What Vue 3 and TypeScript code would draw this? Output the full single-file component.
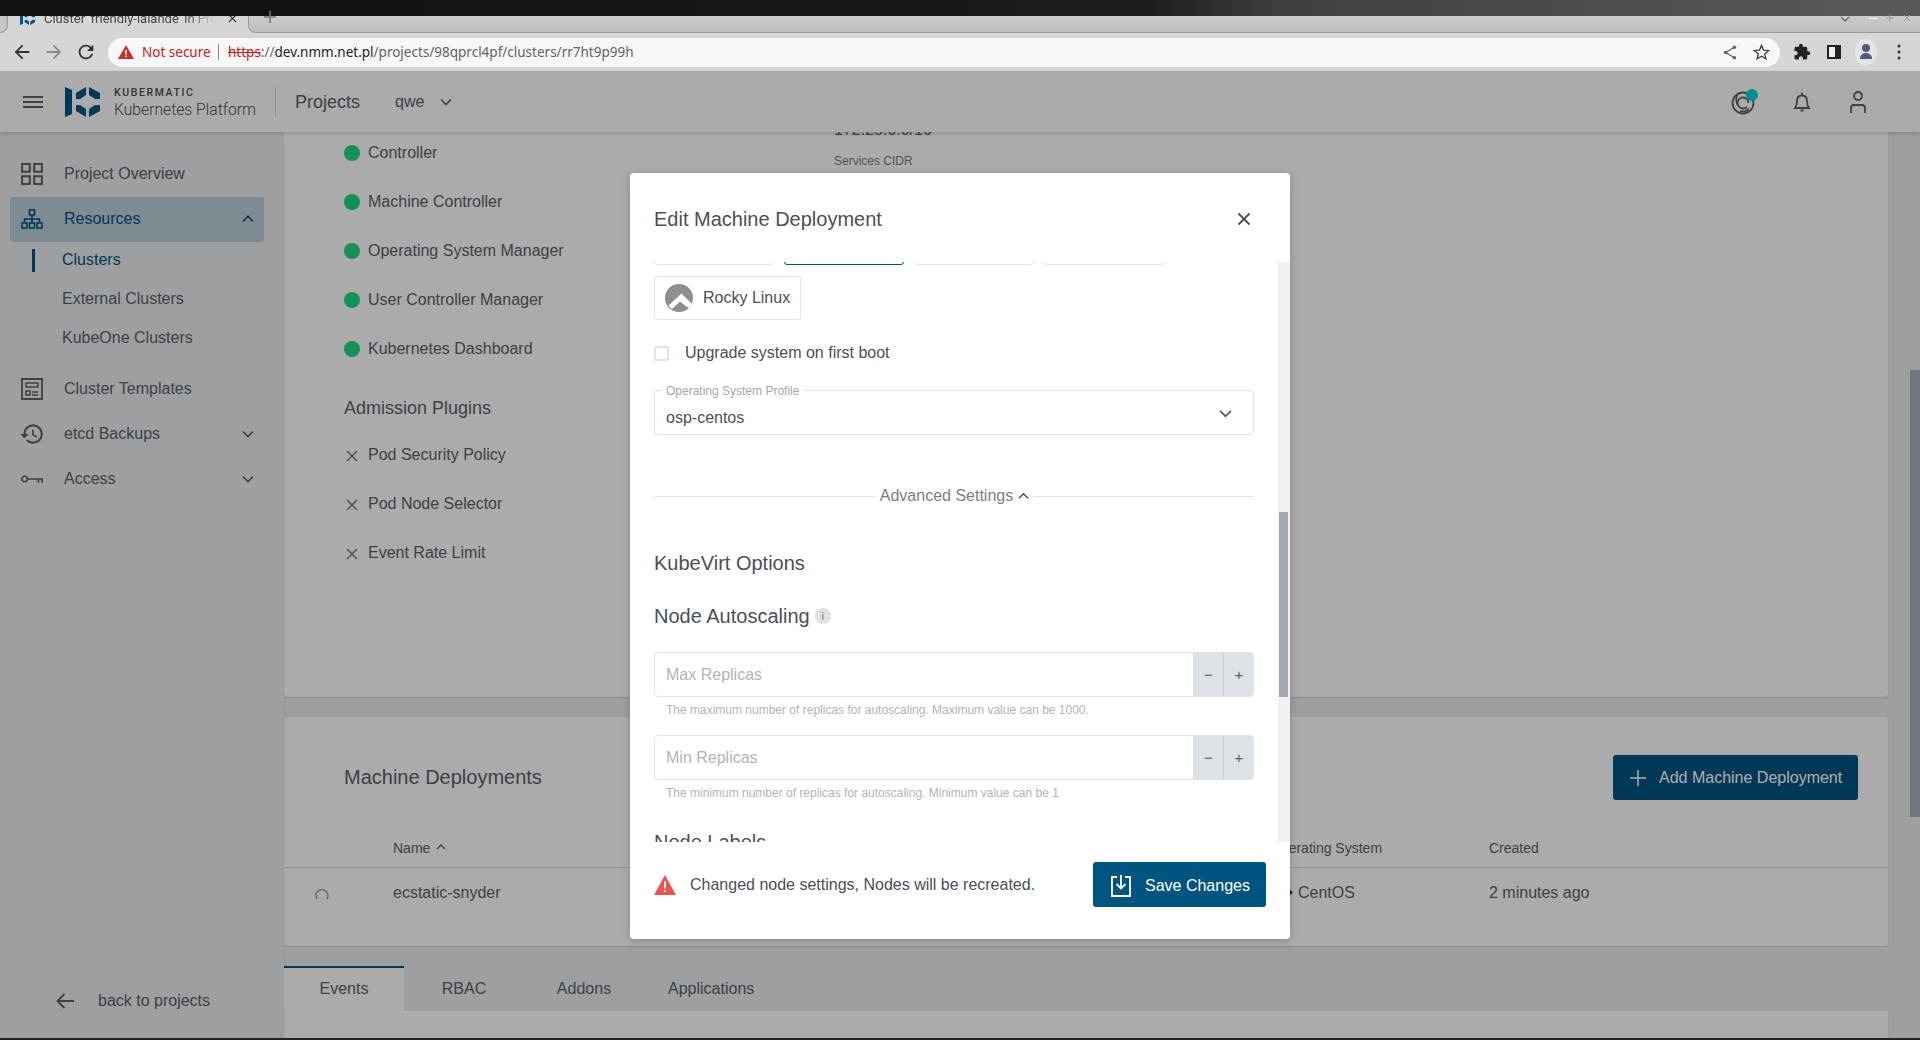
<script setup lang="ts">
const healthRows: string[] = [
  'Controller',
  'Machine Controller',
  'Operating System Manager',
  'User Controller Manager',
  'Kubernetes Dashboard'
]
const admissionPlugins: string[] = ['Pod Security Policy', 'Pod Node Selector', 'Event Rate Limit']
const subItems: string[] = ['Clusters', 'External Clusters', 'KubeOne Clusters']
const tabs: string[] = ['Events', 'RBAC', 'Addons', 'Applications']
const replicaFields = [
  { name: 'Max Replicas', hint: 'The maximum number of replicas for autoscaling. Maximum value can be 1000.' },
  { name: 'Min Replicas', hint: 'The minimum number of replicas for autoscaling. Minimum value can be 1' }
]
</script>

<template>
  <div class="screen">
    <div class="wallpaper"></div>

    <div class="tabstrip">
      <div class="strip-left"></div>
      <div class="browser-tab">
        <div class="browser-tab-inner">
          <svg class="favicon" viewBox="0 0 35 30"><path d="M0 0l7 3v24l-7 3zM21 0v8l-6 4h-4V6zM24 0l11 6v6h-5l-6-4zM11 18h4l6 4v8L11 24zM30 18h5v6l-11 6v-8z" fill="#005480" /></svg>
          <span class="tab-title">Cluster 'friendly-lalande' in Project qwe</span>
          <svg class="tab-close" viewBox="0 0 10 10"><path d="M1 1l8 8M9 1l-8 8" stroke="#333" stroke-width="1.4" /></svg>
        </div>
      </div>
      <div class="strip-right">
        <svg class="new-tab" viewBox="0 0 12 12"><path d="M6 0v12M0 6h12" stroke="#777" stroke-width="1.6" /></svg>
        <div class="window-controls">
          <svg class="win-chevron" viewBox="0 0 10 6"><path d="M1 1l4 4 4-4" fill="none" stroke="#666" stroke-width="1.3" /></svg>
          <span class="win-minus"></span>
          <svg class="win-plus" viewBox="0 0 8 8"><path d="M4 0v8M0 4h8" stroke="#999" stroke-width="1" /></svg>
          <svg class="win-plus" viewBox="0 0 8 8"><path d="M1 1l6 6M7 1l-6 6" stroke="#999" stroke-width="1" /></svg>
        </div>
      </div>
    </div>

    <div class="toolbar">
      <svg class="nav-icon first" viewBox="0 0 24 24"><path d="M20 11H7.830l5.590-5.590L12 4l-8 8 8 8 1.410-1.410L7.830 13H20z" fill="#333" /></svg>
      <svg class="nav-icon" viewBox="0 0 24 24"><path d="M4 11h12.170l-5.590-5.590L12 4l8 8-8 8-1.410-1.410L16.170 13H4z" fill="#888" /></svg>
      <svg class="nav-icon" viewBox="0 0 24 24"><path d="M17.650 6.350A7.958 7.958 0 0 0 12 4c-4.420 0-7.990 3.580-7.990 8s3.570 8 7.990 8c3.730 0 6.840-2.550 7.730-6h-2.080A5.990 5.990 0 0 1 12 18c-3.310 0-6-2.690-6-6s2.690-6 6-6c1.660 0 3.140.69 4.220 1.780L13 11h7V4l-2.350 2.350z" fill="#333" /></svg>
      <div class="omnibox">
        <svg class="warn-small" viewBox="0 0 16 14"><path d="M8 0l8 14H0z" fill="#c9302c" /><path d="M7.200 5h1.600v4.600H7.200zM7.200 10.600h1.600v1.600H7.200z" fill="#fff" /></svg>
        <span class="not-secure">Not secure</span>
        <span class="omni-sep"></span>
        <span class="url"><span class="scheme">https</span><span class="url-path">://</span><span class="host">dev.nmm.net.pl</span><span class="url-path">/projects/98qprcl4pf/clusters/rr7ht9p99h</span></span>
        <svg class="omni-icon share" viewBox="0 0 16 18"><circle cx="13" cy="3" r="2" fill="#5f6368" /><circle cx="3" cy="9" r="2" fill="#5f6368" /><circle cx="13" cy="15" r="2" fill="#5f6368" /><path d="M13 3L3 9l10 6" fill="none" stroke="#5f6368" stroke-width="1.3" /></svg>
        <svg class="omni-icon star" viewBox="0 0 24 24"><path d="M12 17.270L18.180 21l-1.640-7.030L22 9.240l-7.190-.61L12 2 9.190 8.630 2 9.240l5.460 4.730L5.820 21z" fill="none" stroke="#444" stroke-width="2" /></svg>
      </div>
      <svg class="ext-icon puzzle" viewBox="0 0 24 24"><path d="M20.500 11H19V7c0-1.100-.9-2-2-2h-4V3.500a2.500 2.500 0 0 0-5 0V5H4c-1.100 0-1.990.9-1.990 2v3.800H3.500c1.490 0 2.700 1.210 2.700 2.700s-1.210 2.700-2.700 2.700H2V20c0 1.100.9 2 2 2h3.800v-1.500c0-1.490 1.210-2.700 2.700-2.700 1.490 0 2.700 1.210 2.700 2.700V22H17c1.100 0 2-.9 2-2v-4h1.500a2.500 2.500 0 0 0 0-5z" fill="#222" /></svg>
      <svg class="ext-icon panel" viewBox="0 0 14 14"><path d="M0 0h14v14H0z" fill="#222" /><path d="M2 2h6v10H2z" fill="#eee" /></svg>
      <svg class="ext-icon avatar" viewBox="0 0 22 26"><rect width="22" height="26" rx="11" fill="#e3e5ea" /><circle cx="11" cy="9" r="4" fill="#4f5b73" /><path d="M5 20c0-4 3-6 6-6s6 2 6 6z" fill="#4f5b73" /></svg>
      <svg class="ext-icon kebab" viewBox="0 0 4 16"><circle cx="2" cy="2" r="1.5" fill="#333" /><circle cx="2" cy="8" r="1.5" fill="#333" /><circle cx="2" cy="14" r="1.5" fill="#333" /></svg>
    </div>

    <div class="app">
      <header class="app-header">
        <svg class="hamburger" viewBox="0 0 20 12"><path d="M0 1h20M0 6h20M0 11h20" stroke="#5a5f66" stroke-width="1.8" /></svg>
        <svg class="logo" viewBox="0 0 35 30"><path d="M0 0l7 3v24l-7 3zM21 0v8l-6 4h-4V6zM24 0l11 6v6h-5l-6-4zM11 18h4l6 4v8L11 24zM30 18h5v6l-11 6v-8z" fill="#005480" /></svg>
        <div class="brand">
          <span class="brand-top">KUBERMATIC</span>
          <span class="brand-bottom">Kubernetes Platform</span>
        </div>
        <span class="header-divider"></span>
        <span class="projects-link">Projects</span>
        <span class="project-name">qwe</span>
        <svg class="chevron project-chevron" viewBox="0 0 12 8"><path d="M1 1.5l5 5 5-5" /></svg>
        <div class="header-actions">
          <div class="globe">
            <svg viewBox="0 0 24 24"><circle cx="12" cy="12" r="10.500" fill="none" stroke="#5a5f66" stroke-width="1.8" /><path d="M17.500 12a5.500 5.500 0 1 0-1.500 3.800" fill="none" stroke="#5a5f66" stroke-width="1.8" /><path d="M6.500 3.500C4.500 7 5 11 7 14.500M18 17.500c-2 2.500-5.500 3.500-9 2.500" fill="none" stroke="#5a5f66" stroke-width="1.6" /></svg>
            <span class="globe-dot"></span>
          </div>
          <svg class="action bell" viewBox="0 0 24 24"><path d="M5 18c1.500-2 2-3.500 2-7 0-3.500 2-5.500 5-5.500s5 2 5 5.500c0 3.500.5 5 2 7zM12 2.500v3M10.500 20.500h3" fill="none" stroke="#5a5f66" stroke-width="1.8" /></svg>
          <svg class="action" viewBox="0 0 24 24"><circle cx="12" cy="6" r="4" fill="none" stroke="#5a5f66" stroke-width="1.8" /><path d="M5 23v-5c0-2 1-3 3-3h8c2 0 3 1 3 3v5" fill="none" stroke="#5a5f66" stroke-width="1.8" /></svg>
        </div>
      </header>

      <div class="app-body">
        <aside class="sidebar">
          <div class="nav-item overview">
            <svg class="nav-glyph" viewBox="0 0 20 20"><path d="M1 1h7v7H1zM12 1h7v7h-7zM1 12h7v7H1zM12 12h7v7h-7z" fill="none" stroke="#5a5f66" stroke-width="1.8" /></svg>
            <span>Project Overview</span>
          </div>
          <div class="nav-item active">
            <svg class="nav-glyph" viewBox="0 0 22 20"><path d="M8.500 1h5v5h-5zM1 14h5v5H1zM8.500 14h5v5h-5zM16 14h5v5h-5zM11 6v8M3.500 14v-4h15v4" fill="none" stroke="#005480" stroke-width="1.600" /></svg>
            <span>Resources</span>
            <svg class="chevron nav-chevron up" viewBox="0 0 12 8"><path d="M1 6.500l5-5 5 5" /></svg>
          </div>
          <div class="sub-items">
            <div v-for="(item, i) in subItems" :key="item" :class="['sub-item', { current: i === 0 }]">
              <span class="sub-marker"></span>{{ item }}
            </div>
          </div>
          <div class="nav-item">
            <svg class="nav-glyph" viewBox="0 0 22 22"><path d="M1 1h20v20H1z" fill="none" stroke="#5a5f66" stroke-width="1.800" /><path d="M5 5h12v4H5zM5 13h4v4H5z" fill="none" stroke="#5a5f66" stroke-width="1.500" /><path d="M11 14h6M11 17h6" stroke="#5a5f66" stroke-width="1.500" /></svg>
            <span>Cluster Templates</span>
          </div>
          <div class="nav-item">
            <svg class="nav-glyph history" viewBox="0 0 24 24"><path d="M13 3a9 9 0 0 0-9 9H1l3.890 3.890.07.14L9 12H6c0-3.870 3.130-7 7-7s7 3.130 7 7-3.130 7-7 7c-1.930 0-3.680-.79-4.940-2.060l-1.420 1.420A8.954 8.954 0 0 0 13 21a9 9 0 0 0 0-18zm-1 5v5l4.280 2.540.72-1.210-3.500-2.080V8H12z" fill="#5a5f66" /></svg>
            <span>etcd Backups</span>
            <svg class="chevron nav-chevron" viewBox="0 0 12 8"><path d="M1 1.500l5 5 5-5" /></svg>
          </div>
          <div class="nav-item">
            <svg class="nav-glyph" viewBox="0 0 24 10"><circle cx="4" cy="5" r="3" fill="none" stroke="#5a5f66" stroke-width="1.800" /><path d="M7 5h17M19 5v4M23 5v4" fill="none" stroke="#5a5f66" stroke-width="1.800" /></svg>
            <span>Access</span>
            <svg class="chevron nav-chevron" viewBox="0 0 12 8"><path d="M1 1.500l5 5 5-5" /></svg>
          </div>
          <div class="back-link">
            <svg class="back-arrow" viewBox="0 0 18 16"><path d="M18 8H2M8.500 1L1.500 8l7 7" fill="none" stroke="#5a5f66" stroke-width="1.800" /></svg>
            <span>back to projects</span>
          </div>
        </aside>

        <main class="content">
          <section class="card health-card">
            <div class="health-left">
              <div v-for="name in healthRows" :key="name" class="status-row">
                <span class="dot"></span>{{ name }}
              </div>
              <h3 class="plugins-title">Admission Plugins</h3>
              <div v-for="name in admissionPlugins" :key="name" class="status-row plugin-row">
                <svg class="cross" viewBox="0 0 12 12"><path d="M1 1l10 10M11 1L1 11" stroke="#777b82" stroke-width="1.500" /></svg>{{ name }}
              </div>
            </div>
            <div class="health-right">
              <div class="cidr-value">172.25.0.0/16</div>
              <div class="cidr-label">Services CIDR</div>
            </div>
          </section>

          <section class="card md-card">
            <div class="md-head">
              <h2>Machine Deployments</h2>
              <button class="add-btn">
                <svg viewBox="0 0 16 16"><path d="M8 0v16M0 8h16" stroke="#fff" stroke-width="1.500" /></svg>
                Add Machine Deployment
              </button>
            </div>
            <div class="md-row md-header">
              <span></span>
              <span>Name <svg class="sort" viewBox="0 0 10 6"><path d="M1 5l4-4 4 4" fill="none" stroke="#5a5f66" stroke-width="1.300" /></svg></span>
              <span>Operating System</span>
              <span>Created</span>
            </div>
            <div class="md-row md-data">
              <svg class="spinner" viewBox="0 0 14 14"><path d="M2 12A6 6 0 1 1 12 12" fill="none" stroke="#777b82" stroke-width="1.200" /></svg>
              <span>ecstatic-snyder</span>
              <span class="os-cell"><span class="os-mark"></span>CentOS</span>
              <span>2 minutes ago</span>
            </div>
          </section>

          <nav class="page-tabs">
            <span v-for="(tab, i) in tabs" :key="tab" :class="['page-tab', { selected: i === 0 }]">{{ tab }}</span>
          </nav>
          <section class="card tab-panel"></section>
        </main>
        <div class="page-thumb"></div>
      </div>

      <div class="backdrop">
        <div class="dialog">
          <div class="dialog-title">
            <h2>Edit Machine Deployment</h2>
            <svg class="dialog-close" viewBox="0 0 14 14"><path d="M1.500 1.500l11 11M12.500 1.500l-11 11" stroke="#4a5058" stroke-width="1.800" /></svg>
          </div>

          <div class="dialog-body">
            <div class="os-tiles-cut">
              <span class="os-tile"></span>
              <span class="os-tile picked"></span>
              <span class="os-tile"></span>
              <span class="os-tile"></span>
            </div>
            <div class="rocky-tile">
              <svg viewBox="0 0 28 28"><circle cx="14" cy="14" r="14" fill="#8f8f8f" /><path d="M16.500 9.500L27 20l-3.500 4L15 17.500 7 25l-3.500-3.500z" fill="#fff" /></svg>
              Rocky Linux
            </div>
            <label class="check-row"><span class="check-box"></span>Upgrade system on first boot</label>
            <div class="select-field">
              <span class="floating-label">Operating System Profile</span>
              <span class="select-value">osp-centos</span>
              <svg class="chevron select-chevron" viewBox="0 0 12 8"><path d="M1 1.500l5 5 5-5" /></svg>
            </div>
            <div class="advanced">
              <span class="advanced-line"></span>
              <span class="advanced-text">Advanced Settings</span>
              <svg class="chevron advanced-chevron" viewBox="0 0 12 8"><path d="M1 6.500l5-5 5 5" /></svg>
              <span class="advanced-line"></span>
            </div>
            <h3 class="form-heading kubevirt">KubeVirt Options</h3>
            <h3 class="form-heading autoscaling">Node Autoscaling <span class="info-dot">i</span></h3>
            <template v-for="field in replicaFields" :key="field.name">
              <div class="number-field">
                <span class="number-placeholder">{{ field.name }}</span>
                <span class="stepper">&minus;</span>
                <span class="stepper">+</span>
              </div>
              <div class="field-hint">{{ field.hint }}</div>
            </template>
            <h3 class="form-heading labels">Node Labels</h3>
            <div class="body-track"><div class="body-thumb"></div></div>
          </div>

          <div class="dialog-footer">
            <svg class="warn-icon" viewBox="0 0 22 20"><path d="M11 0l11 20H0z" fill="#ef5350" /><path d="M10 6.500h2v7h-2zM10 15h2v2h-2z" fill="#fff" /></svg>
            <span class="warn-text">Changed node settings, Nodes will be recreated.</span>
            <button class="save-btn">
              <svg viewBox="0 0 20 22"><path d="M6 2H1v19h18V2h-5" fill="none" stroke="#fff" stroke-width="1.800" /><path d="M10 0v13M5.500 9l4.500 4.500L14.500 9" fill="none" stroke="#fff" stroke-width="1.800" /></svg>
              Save Changes
            </button>
          </div>
        </div>
      </div>
    </div>
    <div class="bottom-edge"></div>
  </div>
</template>

<style>
html,
body {
  margin: 0;
  overflow: hidden;
}
</style>

<style scoped>
.screen {
  position: relative;
  width: 1920px;
  height: 1040px;
  display: flex;
  flex-direction: column;
  overflow: hidden;
  font-family: "Liberation Sans", Arial, sans-serif;
  color: #5a5f66;
}

h2,
h3 {
  margin: 0;
  font-weight: 400;
}

.wallpaper {
  height: 16px;
  flex: none;
  background: linear-gradient(90deg, #121212 0%, #161616 45%, #1e1e1e 60%, #404040 67%, #5a5a5a 100%);
}

/* browser chrome */
.tabstrip {
  height: 17px;
  flex: none;
  display: flex;
  background: #d6d6d6;
}

.strip-left {
  width: 8px;
  background: #c4c4c4;
  border-bottom: 1px solid #999;
  border-right: 1px solid #999;
  border-bottom-right-radius: 8px;
  box-sizing: border-box;
}

.browser-tab {
  width: 240px;
  overflow: hidden;
}

.browser-tab-inner {
  height: 20px;
  margin-top: -8px;
  display: flex;
  align-items: center;
  padding-left: 12px;
}

.favicon {
  width: 15px;
  height: 13px;
  flex: none;
}

.tab-title {
  width: 172px;
  margin-left: 9px;
  font-family: Roboto, sans-serif;
  font-size: 13px;
  white-space: nowrap;
  overflow: hidden;
  color: #444;
  -webkit-mask-image: linear-gradient(90deg, #000 82%, transparent);
  mask-image: linear-gradient(90deg, #000 82%, transparent);
}

.tab-close {
  width: 9px;
  height: 9px;
  margin-left: 12px;
}

.strip-right {
  flex: 1;
  display: flex;
  justify-content: space-between;
  background: linear-gradient(#cbcbcb, #bdbdbd);
  border-bottom: 1px solid #999;
  border-left: 1px solid #999;
  border-bottom-left-radius: 8px;
  box-sizing: border-box;
}

.new-tab {
  width: 12px;
  height: 12px;
  margin: -5px 0 0 15px;
}

.window-controls {
  display: flex;
  align-items: flex-start;
}

.win-chevron {
  width: 10px;
  height: 6px;
  margin-right: 19px;
}

.win-minus {
  width: 8px;
  height: 1px;
  margin-top: 2px;
  margin-right: 9px;
  background: #fff;
}

.win-plus {
  width: 8px;
  height: 8px;
  margin-right: 9px;
  margin-top: -2px;
}

.toolbar {
  height: 38px;
  flex: none;
  display: flex;
  align-items: center;
  background: #d6d6d6;
  box-sizing: border-box;
}

.nav-icon {
  width: 22px;
  height: 22px;
  margin-right: 10px;
}

.nav-icon.first {
  margin-left: 11px;
}

.omnibox {
  width: 1672px;
  height: 29px;
  margin-left: 1px;
  display: flex;
  align-items: center;
  border-radius: 15px;
  background: #f7f7f7;
  font-family: "Noto Sans", sans-serif;
  font-size: 13.5px;
}

.warn-small {
  width: 16px;
  height: 14px;
  margin-left: 10px;
}

.not-secure {
  margin-left: 8px;
  width: 68px;
  white-space: nowrap;
  color: #c5221f;
}

.omni-sep {
  width: 1px;
  height: 16px;
  margin: 0 9px 0 8px;
  background: #888;
}

.url {
  white-space: nowrap;
  color: #5f6368;
  flex: 1;
}

.scheme {
  color: #c5221f;
  text-decoration: line-through;
}

.host {
  color: #222;
}

.omni-icon {
  flex: none;
}

.share {
  width: 14px;
  height: 17px;
  margin-right: 16px;
}

.star {
  width: 17px;
  height: 17px;
  margin-right: 10px;
}

.ext-icon {
  flex: none;
}

.puzzle {
  width: 18px;
  height: 18px;
  margin-left: 13px;
}

.panel {
  width: 14px;
  height: 14px;
  margin-left: 16px;
}

.avatar {
  width: 22px;
  height: 26px;
  margin-left: 14px;
}

.kebab {
  width: 4px;
  height: 16px;
  margin-left: 20px;
}

/* app */
.app {
  position: relative;
  flex: 1;
  min-height: 0;
  display: flex;
  flex-direction: column;
  background: #e9ebee;
}

.app-header {
  position: relative;
  z-index: 2;
  height: 61px;
  flex: none;
  display: flex;
  align-items: center;
  padding-left: 23px;
  background: #fcfcfc;
  box-shadow: 0 2px 4px rgba(0, 0, 0, 0.15);
}

.hamburger {
  width: 20px;
  height: 12px;
}

.logo {
  width: 35px;
  height: 30px;
  margin-left: 22px;
}

.brand {
  width: 142px;
  margin-left: 14px;
  display: flex;
  flex-direction: column;
  white-space: nowrap;
  color: #494d53;
}

.brand-top {
  font-family: Roboto, sans-serif;
  font-size: 10.5px;
  font-weight: 500;
  letter-spacing: 1.6px;
  line-height: 15px;
}

.brand-bottom {
  font-family: Roboto, sans-serif;
  font-size: 15.7px;
  font-weight: 300;
  line-height: 19px;
}

.header-divider {
  width: 1px;
  height: 30px;
  margin-left: 19px;
  background: #d8d8d8;
}

.projects-link {
  margin: 2px 0 0 19px;
  font-size: 18px;
}

.project-name {
  margin-left: 35px;
  font-size: 16px;
}

.chevron {
  fill: none;
  stroke: #5a5f66;
  stroke-width: 1.6;
}

.project-chevron {
  width: 12px;
  height: 8px;
  margin-left: 16px;
}

.header-actions {
  margin-left: auto;
  padding-right: 50px;
  display: flex;
  align-items: center;
  gap: 32px;
}

.globe {
  position: relative;
  width: 24px;
  height: 24px;
  margin: 3px 3px 0 0;
}

.globe svg {
  display: block;
}

.globe-dot {
  position: absolute;
  top: -2px;
  left: 15px;
  width: 12px;
  height: 12px;
  border-radius: 50%;
  background: #00d1d1;
}

.action {
  width: 24px;
  height: 24px;
}

.app-body {
  position: relative;
  flex: 1;
  min-height: 0;
  display: flex;
}

.sidebar {
  width: 284px;
  flex: none;
  box-sizing: border-box;
  padding: 19px 20px 27px 10px;
  display: flex;
  flex-direction: column;
  font-size: 16px;
  box-shadow: 1px 0 3px rgba(0, 0, 0, 0.08);
}

.nav-item {
  height: 45px;
  flex: none;
  display: flex;
  align-items: center;
  padding: 0 8px 0 11px;
  border-radius: 3px;
}

.nav-item.overview {
  margin-bottom: 1px;
}

.nav-item.active {
  padding-bottom: 2px;
  box-sizing: border-box;
  background: #bbcdd8;
  color: #005480;
}

.nav-item .nav-glyph {
  width: 22px;
  height: 22px;
  margin-right: 21px;
  flex: none;
}

.nav-item .nav-glyph.history {
  width: 26px;
  height: 26px;
  margin: 0 19px 0 -2px;
}

.nav-chevron {
  width: 12px;
  height: 8px;
  margin-left: auto;
  margin-right: 2px;
}

.nav-chevron.up {
  stroke: #005480;
}

.sub-items {
  margin: -1px 0 9px;
}

.sub-item {
  height: 39px;
  display: flex;
  align-items: center;
}

.sub-item.current {
  height: 38px;
  color: #005480;
}

.sub-marker {
  width: 3px;
  height: 23px;
  margin: 0 27px 0 22px;
}

.sub-item.current .sub-marker {
  background: #005480;
}

.back-link {
  margin-top: auto;
  height: 24px;
  display: flex;
  align-items: center;
  padding-left: 46px;
}

.back-arrow {
  width: 18px;
  height: 16px;
  margin-right: 24px;
}

.content {
  flex: 1;
  min-width: 0;
  padding-right: 32px;
  display: flex;
  flex-direction: column;
}

.card {
  background: #fcfcfc;
  border-radius: 0 0 4px 4px;
  box-shadow: 0 1px 2px rgba(0, 0, 0, 0.12);
}

.health-card {
  height: 565px;
  flex: none;
  display: flex;
  overflow: hidden;
  font-size: 16px;
}

.health-left {
  width: 550px;
  flex: none;
  box-sizing: border-box;
  margin-top: -3.5px;
  padding-left: 60px;
}

.status-row {
  height: 49px;
  display: flex;
  align-items: center;
}

.dot {
  width: 16px;
  height: 16px;
  margin-right: 8px;
  border-radius: 50%;
  background: #1dd780;
}

.plugins-title {
  margin: 23.5px 0 11.5px;
  font-size: 18px;
  line-height: 22px;
}

.cross {
  width: 12px;
  height: 12px;
  margin: 2px 10px 0 2px;
}

.health-right {
  margin-top: -10px;
}

.cidr-value {
  line-height: 16px;
}

.cidr-label {
  margin-top: 16px;
  font-size: 12px;
  line-height: 14px;
  color: #767b82;
}

.md-card {
  height: 229px;
  flex: none;
  margin-top: 20px;
  border-radius: 4px;
}

.md-head {
  height: 111px;
  box-sizing: border-box;
  padding: 38px 30px 0 60px;
  display: flex;
  justify-content: space-between;
  align-items: flex-start;
}

.md-head h2 {
  font-size: 20px;
  line-height: 45px;
}

.add-btn,
.save-btn {
  height: 45px;
  display: flex;
  align-items: center;
  border: 0;
  border-radius: 3px;
  background: #005480;
  color: #fff;
  font-family: inherit;
  font-size: 16px;
}

.add-btn {
  width: 245px;
  padding: 0 0 0 17px;
}

.add-btn svg {
  width: 16px;
  height: 16px;
  margin-right: 13px;
}

.md-row {
  display: grid;
  grid-template-columns: 109px 877px 219px 1fr;
  align-items: center;
}

.md-header {
  height: 40px;
  font-size: 14px;
  border-bottom: 1px solid #d9d9d9;
  box-sizing: border-box;
}

.sort {
  width: 10px;
  height: 6px;
  margin-left: 2px;
  vertical-align: 3px;
}

.md-data {
  height: 49px;
  font-size: 16px;
}

.spinner {
  width: 14px;
  height: 14px;
  margin-left: 31px;
  margin-top: 2px;
}

.os-cell {
  display: flex;
  align-items: center;
}

.os-mark {
  width: 5px;
  height: 5px;
  margin: 0 6px 0 17px;
  background: #005480;
  transform: rotate(45deg);
}

.page-tabs {
  height: 45px;
  flex: none;
  margin-top: 20px;
  display: flex;
  font-size: 16px;
}

.page-tab {
  min-width: 120px;
  box-sizing: border-box;
  padding: 0 24px 2px;
  display: flex;
  align-items: center;
  justify-content: center;
  border-top: 2px solid transparent;
}

.page-tab.selected {
  background: #fcfcfc;
  border-top-color: #005480;
}

.tab-panel {
  flex: 1;
}

.page-thumb {
  position: absolute;
  right: 0;
  top: 238px;
  width: 10px;
  height: 447px;
  background: #a9b0bb;
}

/* dialog */
.backdrop {
  position: absolute;
  inset: 0;
  z-index: 5;
  display: flex;
  align-items: center;
  justify-content: center;
  background: rgba(0, 0, 0, 0.32);
}

.dialog {
  width: 660px;
  height: 766px;
  margin-top: 1px;
  display: flex;
  flex-direction: column;
  border-radius: 4px;
  background: #fff;
  box-shadow: 0 2px 8px rgba(0, 0, 0, 0.2);
  color: #4a5058;
}

.dialog-title {
  height: 89px;
  flex: none;
  box-sizing: border-box;
  padding: 34px 39px 0 24px;
  display: flex;
  justify-content: space-between;
  align-items: flex-start;
}

.dialog-title h2 {
  font-size: 20px;
  line-height: 24px;
}

.dialog-close {
  width: 14px;
  height: 14px;
  margin-top: 5px;
}

.dialog-body {
  position: relative;
  flex: 1;
  min-height: 0;
  overflow: hidden;
  padding: 0 36px 0 24px;
  font-size: 16px;
}

.os-tiles-cut {
  height: 3px;
  display: flex;
  gap: 10px;
  align-items: flex-end;
}

.os-tile {
  width: 120px;
  height: 20px;
  flex: none;
  box-sizing: border-box;
  border: 1px solid #e1e4e8;
  border-radius: 3px;
}

.os-tile.picked {
  border-color: #005480;
}

.rocky-tile {
  width: 147px;
  height: 44px;
  margin-top: 11px;
  box-sizing: border-box;
  padding-left: 10px;
  display: flex;
  align-items: center;
  border: 1px solid #e1e4e8;
  border-radius: 3px;
}

.rocky-tile svg {
  width: 28px;
  height: 28px;
  margin-right: 10px;
}

.check-row {
  height: 16px;
  margin-top: 25px;
  display: flex;
  align-items: center;
}

.check-box {
  width: 15px;
  height: 15px;
  margin-right: 16px;
  box-sizing: border-box;
  border: 2px solid #e1e4e8;
  border-radius: 2px;
}

.select-field {
  position: relative;
  height: 45px;
  margin-top: 29px;
  box-sizing: border-box;
  padding: 10px 11px 0;
  display: flex;
  justify-content: space-between;
  align-items: center;
  border: 1px solid #e1e4e8;
  border-radius: 4px;
}

.floating-label {
  position: absolute;
  left: 7px;
  top: -7px;
  padding: 0 5px 0 4px;
  background: #fff;
  font-size: 12px;
  line-height: 14px;
  color: #a3a7ad;
}

.select-chevron {
  width: 13px;
  height: 9px;
  margin: -9px 10px 0 0;
}

.advanced {
  height: 20px;
  margin-top: 51px;
  display: flex;
  align-items: center;
  color: #7a7f86;
}

.advanced-line {
  flex: 1;
  height: 1px;
  background: #e1e4e8;
}

.advanced-text {
  margin-left: 5px;
}

.advanced-chevron {
  width: 11px;
  height: 8px;
  margin: 0 4px 0 5px;
  stroke: #4a5058;
}

.form-heading {
  font-size: 20px;
  line-height: 24px;
}

.kubevirt {
  margin-top: 45px;
}

.autoscaling {
  margin: 29px 0 24px;
  display: flex;
  align-items: center;
}

.info-dot {
  width: 16px;
  height: 16px;
  margin-left: 5px;
  border-radius: 50%;
  background: #dfe2e5;
  color: #6b7077;
  font-size: 11px;
  line-height: 16px;
  text-align: center;
}

.number-field {
  height: 45px;
  box-sizing: border-box;
  display: flex;
  align-items: center;
  border: 1px solid #e1e4e8;
  border-radius: 4px;
  overflow: hidden;
}

.number-placeholder {
  flex: 1;
  padding-left: 11px;
  color: #b1b4b9;
}

.stepper {
  width: 30px;
  height: 100%;
  box-sizing: border-box;
  padding-left: 1px;
  display: flex;
  align-items: center;
  justify-content: center;
  background: #dfe2e5;
  color: #575c63;
  font-size: 15px;
}

.stepper + .stepper {
  border-left: 1px solid #cfd3d6;
}

.field-hint {
  height: 14px;
  margin: 6px 0 18px;
  padding-left: 12px;
  font-size: 12px;
  line-height: 14px;
  color: #b1b4b9;
}

.labels {
  margin-top: 30px;
}

.body-track {
  position: absolute;
  top: 0;
  right: 0;
  bottom: 0;
  width: 12px;
  background: #f0f1f3;
}

.body-thumb {
  width: 9px;
  height: 185px;
  margin: 250px 0 0 1px;
  background: #a4a9b3;
}

.dialog-footer {
  height: 97px;
  flex: none;
  box-sizing: border-box;
  padding: 20px 24px 0;
  display: flex;
  align-items: flex-start;
}

.warn-icon {
  width: 22px;
  height: 20px;
  margin-top: 13px;
  flex: none;
}

.warn-text {
  margin: 14px 0 0 14px;
  font-size: 16px;
  line-height: 18px;
}

.save-btn {
  width: 173px;
  margin-left: auto;
  padding: 2px 0 0 18px;
}

.save-btn svg {
  width: 20px;
  height: 22px;
  margin-right: 14px;
}

.bottom-edge {
  position: absolute;
  left: 0;
  right: 0;
  bottom: 0;
  height: 2px;
  background: #222;
  z-index: 9;
}
</style>
